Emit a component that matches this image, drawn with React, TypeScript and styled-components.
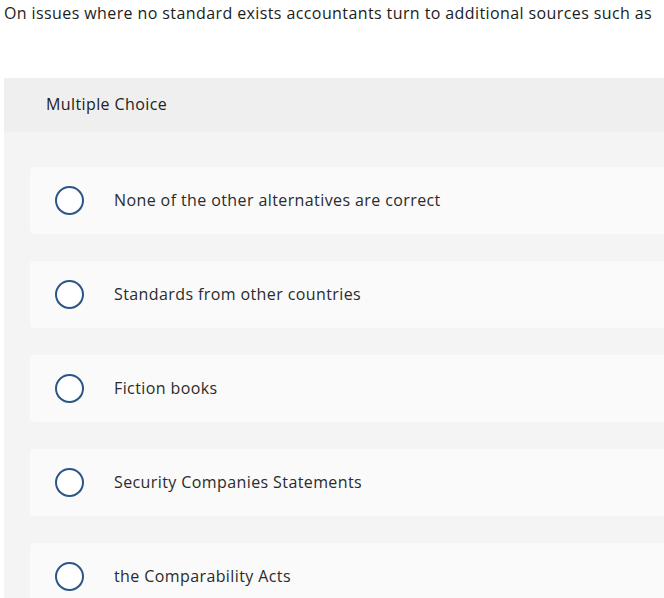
import React from 'react';
import styled, { createGlobalStyle } from 'styled-components';

const GlobalStyle = createGlobalStyle`
  html, body {
    margin: 0;
    padding: 0;
    background: #ffffff;
    font-family: "Open Sans", "Lato", sans-serif;
    letter-spacing: 0.4px;
    overflow: hidden;
  }
`;

const Page = styled.div`
  width: 664px;
  height: 598px;
  overflow: hidden;
`;

const Question = styled.p`
  margin: 0;
  padding: 3px 0 0 4px;
  font-size: 16px;
  line-height: 20px;
  color: #1c1c1c;
  white-space: nowrap;
`;

const Panel = styled.div`
  margin: 55px 0 0 4px;
  width: 680px;
  background: #f4f4f4;
`;

const PanelHeader = styled.div`
  height: 54px;
  display: flex;
  align-items: center;
  padding-left: 42px;
  padding-bottom: 2px;
  box-sizing: border-box;
  background: #efefef;
  font-size: 16px;
  color: #222;
`;

const OptionList = styled.div`
  display: flex;
  flex-direction: column;
  gap: 27px;
  padding: 35px 0 0 26px;
`;

const Option = styled.label`
  height: 67px;
  display: flex;
  align-items: center;
  background: #fafafa;
  border-radius: 4px;
  padding-left: 25px;
  padding-bottom: 1px;
  box-sizing: border-box;
  font-size: 16px;
  color: #2b2b2b;
  cursor: pointer;
`;

const Radio = styled.span`
  width: 25px;
  height: 25px;
  border: 2px solid #2a5688;
  border-radius: 50%;
  background: #ffffff;
  margin-right: 30px;
  flex-shrink: 0;
`;

const options = [
  'None of the other alternatives are correct',
  'Standards from other countries',
  'Fiction books',
  'Security Companies Statements',
  'the Comparability Acts',
];

function App() {
  return (
    <Page>
      <GlobalStyle />
      <Question>On issues where no standard exists accountants turn to additional sources such as</Question>
      <Panel>
        <PanelHeader>Multiple Choice</PanelHeader>
        <OptionList>
          {options.map((o) => (
            <Option key={o}>
              <Radio />
              {o}
            </Option>
          ))}
        </OptionList>
      </Panel>
    </Page>
  );
}

export default App;
